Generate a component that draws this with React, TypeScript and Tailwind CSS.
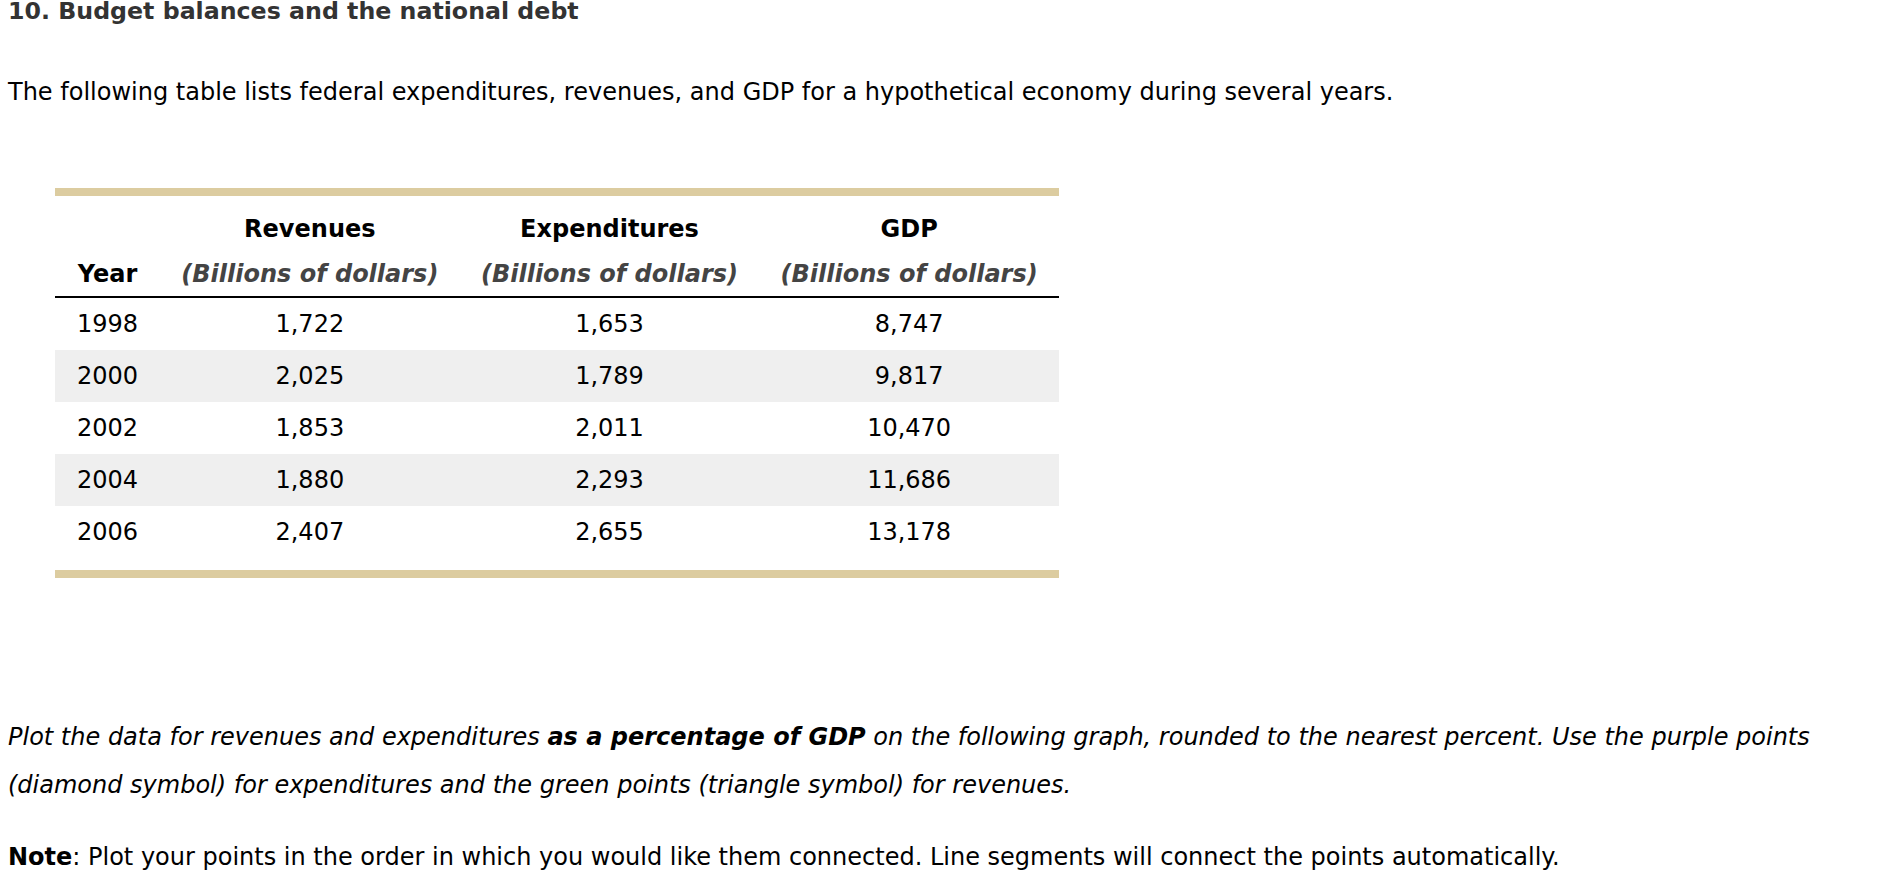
const rows = [
  { year: "1998", rev: "1,722", exp: "1,653", gdp: "8,747" },
  { year: "2000", rev: "2,025", exp: "1,789", gdp: "9,817" },
  { year: "2002", rev: "1,853", exp: "2,011", gdp: "10,470" },
  { year: "2004", rev: "1,880", exp: "2,293", gdp: "11,686" },
  { year: "2006", rev: "2,407", exp: "2,655", gdp: "13,178" },
];

const cols = "grid grid-cols-[105px_1fr_1fr_1fr] text-center";

export default function App() {
  return (
    <div className="min-h-screen bg-white pl-[8px] font-['DejaVu_Sans',Verdana,sans-serif] text-[24px] text-black">
      <h1 className="text-[23.7px] font-bold leading-[23px] text-[#333]">
        10. Budget balances and the national debt
      </h1>

      <p className="mt-[45px] leading-[48px]">
        The following table lists federal expenditures, revenues, and GDP for a
        hypothetical economy during several years.
      </p>

      {/* Data table */}
      <div className="ml-[47px] mt-[72px] w-[1004px]">
        <div className="h-[8px] bg-[#dccca0]" />
        <div className="border-b-2 border-black pb-[8px] pt-[19px] leading-[28px]">
          <div className={cols + " font-bold"}>
            <div />
            <div>Revenues</div>
            <div>Expenditures</div>
            <div>GDP</div>
          </div>
          <div className={cols + " mt-[17px] font-bold"}>
            <div>Year</div>
            <div className="italic text-[#444]">(Billions of dollars)</div>
            <div className="italic text-[#444]">(Billions of dollars)</div>
            <div className="italic text-[#444]">(Billions of dollars)</div>
          </div>
        </div>
        <div className="pb-[12px]">
          {rows.map((row, idx) => (
            <div
              key={row.year}
              className={
                cols +
                " h-[52px] items-center leading-[28px]" +
                (idx % 2 === 1 ? " bg-[#efefef]" : "")
              }
            >
              <div>{row.year}</div>
              <div>{row.rev}</div>
              <div>{row.exp}</div>
              <div>{row.gdp}</div>
            </div>
          ))}
        </div>
        <div className="h-[8px] bg-[#dccca0]" />
      </div>

      <p className="mt-[135px] italic leading-[48px]">
        Plot the data for revenues and expenditures{" "}
        <strong className="font-bold">as a percentage of GDP</strong> on the
        following graph, rounded to the nearest percent. Use the purple points
        (diamond symbol) for expenditures and the green points (triangle symbol)
        for revenues.
      </p>

      <p className="mt-[24px] leading-[48px]">
        <strong className="font-bold">Note</strong>: Plot your points in the
        order in which you would like them connected. Line segments will connect
        the points automatically.
      </p>
    </div>
  );
}
